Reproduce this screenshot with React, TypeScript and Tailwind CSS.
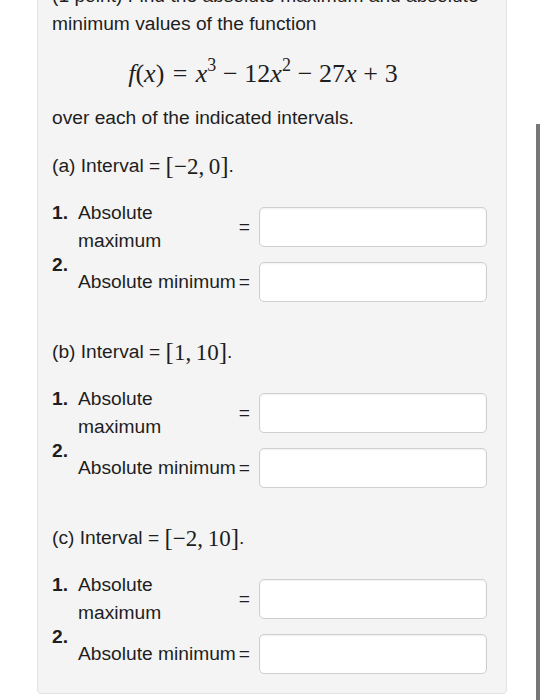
const sans = "font-['Liberation_Sans',Arial,sans-serif]";
const serif = "font-['Liberation_Serif','Times_New_Roman',serif]";

function Interval({ label, lo, hi }: { label: string; lo: string; hi: string }) {
  return (
    <div className="flex h-[28px] items-center leading-[28px]">
      <span>({label}) Interval =&nbsp;</span>
      <span className={`${serif} text-[23px]`}>
        <span className="text-[25px] font-light">[</span>
        {lo},&thinsp;{hi}
        <span className="text-[25px] font-light">]</span>
      </span>
      <span>.</span>
    </div>
  );
}

function Answer({ n, label, wraps }: { n: number; label: string; wraps?: boolean }) {
  return (
    <div className={`flex items-start ${wraps ? "" : "-mt-[4px]"}`}>
      <span className="w-[26px] shrink-0 font-bold leading-[28px]">{n}.</span>
      <div className={`flex items-center ${wraps ? "" : "mt-[11px]"}`}>
        <div className="flex w-[172px] items-center leading-[28px]">
          <span className="flex-1">{label}</span>
          <span>=</span>
        </div>
        <input
          type="text"
          className="ml-[9px] h-[40px] w-[228px] rounded-[5px] border border-[#cfcfcf] bg-white shadow-[inset_0_1px_2px_rgba(0,0,0,0.06)] outline-none"
        />
      </div>
    </div>
  );
}

function Part({ label, lo, hi, first }: { label: string; lo: string; hi: string; first?: boolean }) {
  return (
    <section className={first ? "mt-[20px]" : "mt-[36px]"}>
      <Interval label={label} lo={lo} hi={hi} />
      <div className="mt-[19px]">
        <Answer n={1} label="Absolute maximum" wraps />
        <Answer n={2} label="Absolute minimum" />
      </div>
    </section>
  );
}

export default function App() {
  return (
    <div className={`relative h-[700px] overflow-hidden bg-white ${sans} text-[19.2px] text-[#1e1e1e]`}>
      <div className="-mt-[30px] ml-[37px] w-[470px] rounded-b-[4px] border border-[#e2e2e2] bg-[#f4f4f4] px-[14px] pt-[11px] pb-[19px]">
        <p className="leading-[28px] whitespace-nowrap">(1 point) Find the absolute maximum and absolute</p>
        <p className="leading-[28px]">minimum values of the function</p>
        <div className={`mt-[14px] flex h-[42px] items-center justify-center pr-[18px] ${serif} text-[26px]`}>
          <i>f</i>(<i>x</i>)<span className="mx-[0.32em]">=</span>
          <i>x</i>
          <sup className="top-[-0.45em] text-[18px]">3</sup>
          <span className="mx-[0.26em]">−</span>12<i>x</i>
          <sup className="top-[-0.45em] text-[18px]">2</sup>
          <span className="mx-[0.26em]">−</span>27<i>x</i>
          <span className="mx-[0.26em]">+</span>3
        </div>
        <p className="mt-[10px] leading-[28px]">over each of the indicated intervals.</p>
        <Part label="a" lo="−2" hi="0" first />
        <Part label="b" lo="1" hi="10" />
        <Part label="c" lo="−2" hi="10" />
      </div>
      <div className="absolute top-[124px] left-[536px] h-[600px] w-[4px] bg-[#777]" />
    </div>
  );
}
